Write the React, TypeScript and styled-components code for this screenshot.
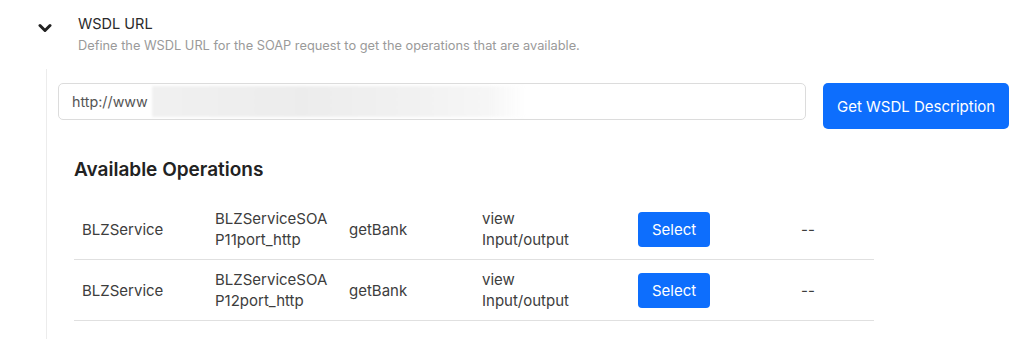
import React from "react";
import styled, { createGlobalStyle } from "styled-components";

const Global = createGlobalStyle`
  html, body { margin: 0; padding: 0; background: #fff; }
  body { font-family: Inter, "Noto Sans", sans-serif; color: #333; width: 1024px; height: 339px; overflow: hidden; }
  * { box-sizing: border-box; }
`;

const Page = styled.div`
  padding: 12px 0 0 36px;
`;

const Header = styled.div`
  display: flex;
  align-items: flex-start;
`;

const Toggle = styled.div`
  width: 42px;
  padding-top: 5px;
  padding-left: 2px;
  height: 20px;
`;

const HeadText = styled.div`
  display: flex;
  flex-direction: column;
`;

const Title = styled.div`
  font-size: 14.5px;
  font-weight: 400;
  color: #2a2a2a;
  line-height: 24px;
`;

const Desc = styled.div`
  font-size: 12.8px;
  color: #9a9a9a;
  line-height: 17px;
  margin-top: 1px;
`;

const Body = styled.div`
  margin-top: 15px;
  margin-left: 10px;
  border-left: 1px solid #ececec;
  padding: 14px 0 20px 11px;
  min-height: 280px;
`;

const UrlRow = styled.div`
  display: flex;
  align-items: flex-start;
  gap: 17px;
`;

const InputBox = styled.div`
  position: relative;
  width: 748px;
  height: 37px;
  border: 1px solid #dcdcdc;
  border-radius: 5px;
  display: flex;
  align-items: center;
  padding-left: 13px;
  font-size: 14.3px;
  color: #555;
  overflow: hidden;
`;

const Blur = styled.div`
  position: absolute;
  left: 93px;
  top: 2px;
  width: 375px;
  height: 31px;
  background: linear-gradient(90deg, #f0f0f0 0%, #ececec 40%, #f1f1f1 70%, #f6f6f6 90%, rgba(255,255,255,0) 100%);
  filter: blur(1.5px);
`;

const PrimaryButton = styled.button<{ $big?: boolean }>`
  background: #0d6efd;
  color: #fff;
  border: none;
  border-radius: ${(p) => (p.$big ? "5px" : "4px")};
  font-family: Inter, "Noto Sans", sans-serif;
  font-size: 15px;
  height: ${(p) => (p.$big ? "46px" : "35px")};
  padding: 0 14px;
  cursor: pointer;
  white-space: nowrap;
`;

const Heading = styled.h3`
  margin: 29px 0 0 16px;
  font-size: 19px;
  font-weight: 600;
  color: #222;
  line-height: 24px;
`;

const Table = styled.div`
  margin: 17px 0 0 16px;
  width: 800px;
`;

const Row = styled.div`
  display: grid;
  grid-template-columns: 133px 134px 133px 156px 163px 81px;
  align-items: center;
  height: 61px;
  border-bottom: 1px solid #e0e0e0;
`;

const Cell = styled.div`
  padding: 0 8px;
  font-size: 15px;
  line-height: 21px;
  color: #3d3d3d;
  word-break: break-all;
`;

const Chevron = () => (
  <svg width="14" height="10" viewBox="0 0 14 10">
    <path d="M2 2.5 L7 7.5 L12 2.5" fill="none" stroke="#222" strokeWidth="3" strokeLinecap="round" strokeLinejoin="round" />
  </svg>
);

const ops = [
  { svc: "BLZService", port: ["BLZServiceSOA", "P11port_http"], op: "getBank" },
  { svc: "BLZService", port: ["BLZServiceSOA", "P12port_http"], op: "getBank" },
];

export default function App() {
  return (
    <>
      <Global />
      <Page>
        <Header>
          <Toggle>
            <Chevron />
          </Toggle>
          <HeadText>
            <Title>WSDL URL</Title>
            <Desc>Define the WSDL URL for the SOAP request to get the operations that are available.</Desc>
          </HeadText>
        </Header>
        <Body>
          <UrlRow>
            <InputBox>
              http://www
              <Blur />
            </InputBox>
            <PrimaryButton $big>Get WSDL Description</PrimaryButton>
          </UrlRow>
          <Heading>Available Operations</Heading>
          <Table>
            {ops.map((o, i) => (
              <Row key={i}>
                <Cell>{o.svc}</Cell>
                <Cell>
                  {o.port[0]}
                  <br />
                  {o.port[1]}
                </Cell>
                <Cell>{o.op}</Cell>
                <Cell>
                  view
                  <br />
                  Input/output
                </Cell>
                <Cell>
                  <PrimaryButton>Select</PrimaryButton>
                </Cell>
                <Cell>--</Cell>
              </Row>
            ))}
          </Table>
        </Body>
      </Page>
    </>
  );
}
